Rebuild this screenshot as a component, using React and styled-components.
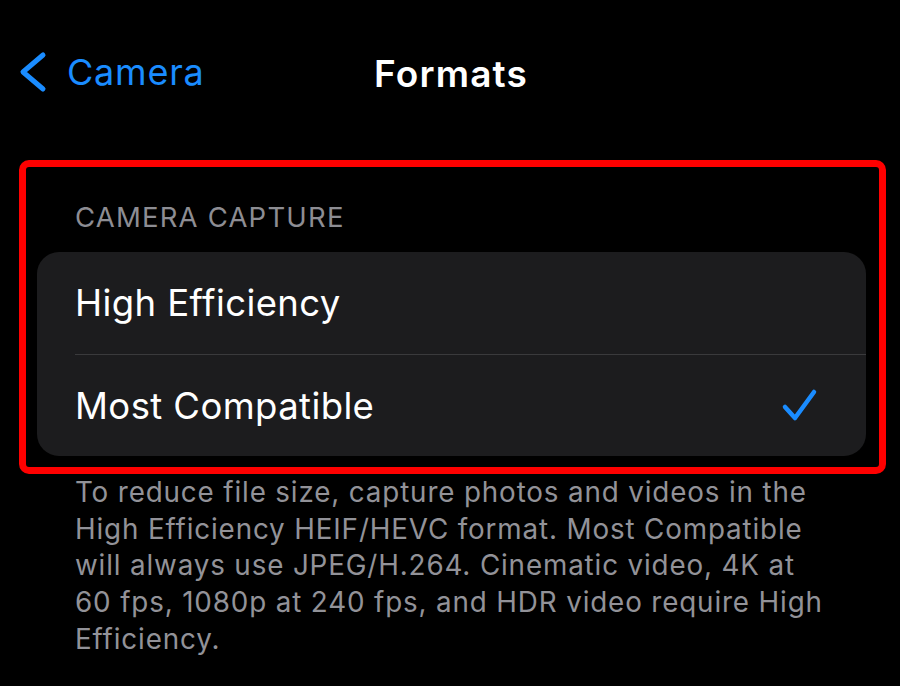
import React from "react";
import styled, { createGlobalStyle } from "styled-components";

const GlobalStyle = createGlobalStyle`
  html, body {
    margin: 0;
    padding: 0;
    background: #000;
  }
  body {
    font-family: Inter, "Noto Sans", "Liberation Sans", sans-serif;
    -webkit-font-smoothing: antialiased;
  }
`;

const App = () => {
  return (
    <Page>
      <GlobalStyle />
      <NavBar>
        <BackButton>
          <svg width="30" height="44" viewBox="0 0 30 44" fill="none">
            <path
              d="M25 5 L5 22 L25 39"
              stroke="#1a8cff"
              strokeWidth="5"
              strokeLinecap="round"
              strokeLinejoin="round"
            />
          </svg>
          <span>Camera</span>
        </BackButton>
        <Title>Formats</Title>
        <span />
      </NavBar>
      <Highlight>
        <SectionHeader>CAMERA CAPTURE</SectionHeader>
        <Card>
          <Row>
            <RowLabel>High Efficiency</RowLabel>
          </Row>
          <Row divided>
            <RowLabel>Most Compatible</RowLabel>
            <svg width="40" height="40" viewBox="0 0 40 40" fill="none">
              <path
                d="M5 21 L15 32 L34 6"
                stroke="#1a8cff"
                strokeWidth="4.5"
                strokeLinecap="round"
                strokeLinejoin="round"
              />
            </svg>
          </Row>
        </Card>
      </Highlight>
      <Footer>
        To reduce file size, capture photos and videos in the
        <br />
        High Efficiency HEIF/HEVC format. Most Compatible
        <br />
        will always use JPEG/H.264. Cinematic video, 4K at
        <br />
        60 fps, 1080p at 240 fps, and HDR video require High
        <br />
        Efficiency.
      </Footer>
    </Page>
  );
};

const Page = styled.div`
  width: 900px;
  min-height: 686px;
  background: #000;
  overflow: hidden;
`;

const NavBar = styled.div`
  height: 146px;
  display: grid;
  grid-template-columns: 1fr auto 1fr;
  align-items: center;
  padding: 0 20px 0 18px;
  box-sizing: border-box;
`;

const BackButton = styled.div`
  display: flex;
  align-items: center;
  gap: 19px;
  color: #1a8cff;
  font-size: 36px;
  letter-spacing: 0.8px;
  margin-top: -2px;
`;

const Title = styled.div`
  color: #fff;
  font-size: 37px;
  font-weight: 600;
  letter-spacing: 1.2px;
  padding-left: 4px;
`;

const Highlight = styled.div`
  margin: 14px 14px 0 19px;
  border: 7px solid #fe0000;
  border-radius: 10px;
  padding: 0 13px 11px 11px;
`;

const SectionHeader = styled.div`
  color: #8d8d93;
  font-size: 27.5px;
  letter-spacing: 1.2px;
  padding: 33px 0 17px 38px;
  line-height: 35px;
`;

const Card = styled.div`
  background: #1c1c1e;
  border-radius: 22px;
  overflow: hidden;
`;

const Row = styled.div`
  height: 102px;
  display: flex;
  align-items: center;
  justify-content: space-between;
  margin-left: 38px;
  padding-right: 46px;
  border-top: ${(p) => (p.divided ? "1.5px solid #3a3a3c" : "none")};
  box-sizing: border-box;
`;

const RowLabel = styled.span`
  color: #fff;
  font-size: 36.5px;
  letter-spacing: 0.4px;
`;

const Footer = styled.p`
  margin: 0 0 0 75px;
  color: #929298;
  font-size: 27.8px;
  line-height: 36.7px;
  letter-spacing: 0.85px;
  white-space: nowrap;
`;

export default App;
